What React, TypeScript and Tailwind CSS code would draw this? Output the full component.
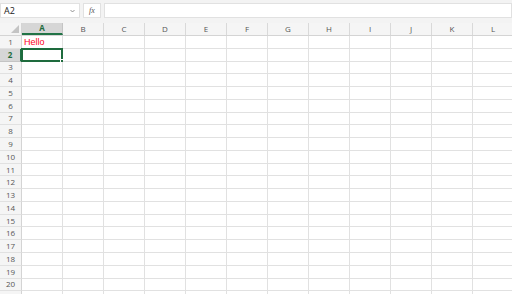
import React from 'react';

const cols = ['A', 'B', 'C', 'D', 'E', 'F', 'G', 'H', 'I', 'J', 'K', 'L'];
const rows = Array.from({ length: 21 }, (_, i) => i + 1);

export default function App() {
  return (
    <div
      className="w-[512px] h-[294px] overflow-hidden bg-[#f3f3f3] text-[#444]"
      style={{ fontFamily: '"Open Sans", "Noto Sans", sans-serif' }}
    >
      {/* formula bar */}
      <div className="flex h-[23px] pt-[3px] pb-[5px] gap-[3px]">
        <div className="w-[80px] h-[15px] bg-white border border-[#e1e1e1] flex items-center justify-between pl-[3px] pr-[4px]">
          <span className="text-[9px] text-[#222]">A2</span>
          <svg width="5" height="4" viewBox="0 0 5 4">
            <path d="M0.5 1 L2.5 3 L4.5 1" stroke="#777" strokeWidth="0.8" fill="none" />
          </svg>
        </div>
        <div className="w-[18px] h-[15px] bg-white border border-[#e1e1e1] flex items-center justify-center">
          <span className="text-[8px] italic text-[#555]" style={{ fontFamily: '"Liberation Serif", serif' }}>
            fx
          </span>
        </div>
        <div className="flex-1 h-[15px] bg-white border border-[#e1e1e1]" />
      </div>

      {/* grid */}
      <div className="bg-white">
        <div className="flex h-[13px] bg-[#f5f5f5] border-b border-[#d4d4d4]">
          <div className="w-[22px] shrink-0 relative border-r border-[#d4d4d4]">
            <div className="absolute right-[2px] bottom-[2px] w-0 h-0 border-l-[8px] border-l-transparent border-b-[8px] border-b-[#c4c4c4]" />
          </div>
          {cols.map((c) => (
            <div
              key={c}
              className={
                c === 'A'
                  ? 'w-[41px] shrink-0 flex items-center justify-center text-[8px] font-bold text-[#1e6b3d] bg-[#d6d6d6] border-r border-[#c4c4c4] border-b-2 border-b-[#217346]'
                  : 'w-[41px] shrink-0 flex items-center justify-center text-[8px] text-[#555] border-r border-[#d9d9d9]'
              }
            >
              {c}
            </div>
          ))}
        </div>
        {rows.map((r) => (
          <div key={r} className="flex h-[12.78px]">
            <div
              className={
                r === 2
                  ? 'w-[22px] shrink-0 flex items-center justify-center text-[8px] font-bold text-[#1e6b3d] bg-[#d6d6d6] border-r-2 border-r-[#217346] border-b border-[#c4c4c4]'
                  : 'w-[22px] shrink-0 flex items-center justify-center text-[8px] text-[#555] bg-[#f5f5f5] border-r border-[#d4d4d4] border-b border-b-[#e1e1e1]'
              }
            >
              {r <= 20 ? r : ''}
            </div>
            {cols.map((c) => (
              <div
                key={c}
                className="w-[41px] shrink-0 relative border-r border-b border-[#e1e1e1]"
              >
                {r === 1 && c === 'A' && (
                  <span
                    className="absolute left-[2px] top-[0px] text-[9px] text-[#ff0022] leading-[12px]"
                    style={{ fontFamily: '"Liberation Sans", sans-serif' }}
                  >
                    Hello
                  </span>
                )}
                {r === 2 && c === 'A' && (
                  <div className="absolute -left-[1px] -top-[1px] w-[42px] h-[14px] border-2 border-[#1e6b3d]">
                    <div className="absolute -right-[3px] -bottom-[3px] w-[4px] h-[4px] bg-[#1e6b3d] border border-white" />
                  </div>
                )}
              </div>
            ))}
          </div>
        ))}
      </div>
    </div>
  );
}
